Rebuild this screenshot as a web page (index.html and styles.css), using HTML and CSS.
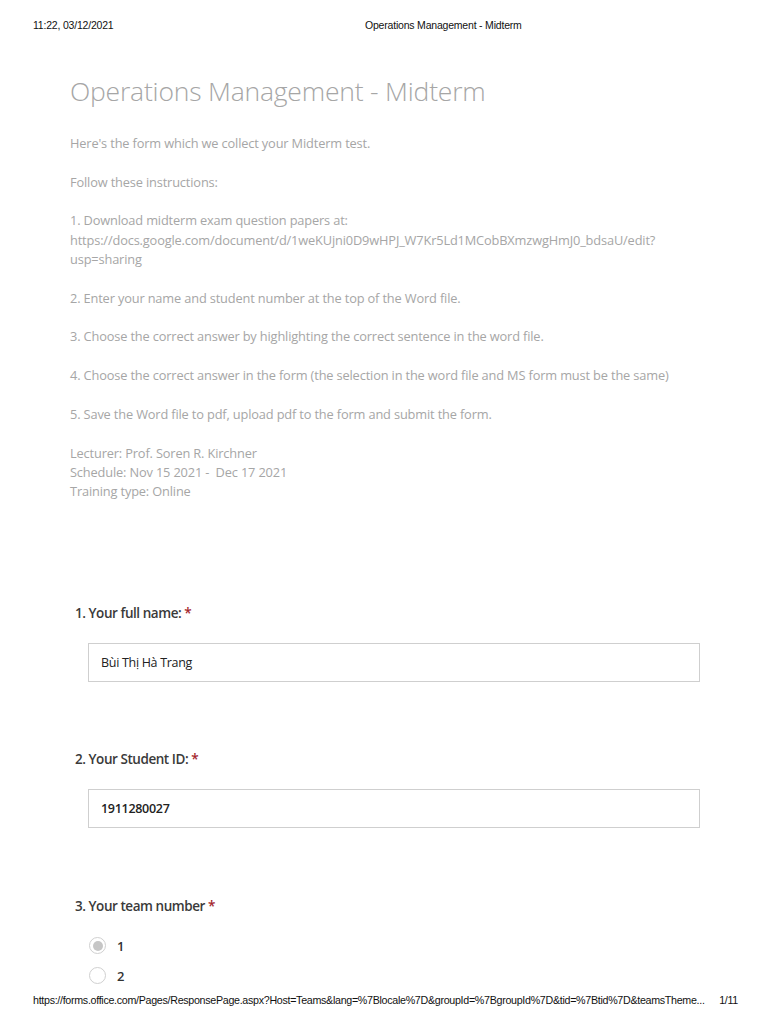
FILE: index.html
```
<!DOCTYPE html>
<html lang="en">
<head>
<meta charset="utf-8">
<title>Operations Management - Midterm</title>
<link rel="stylesheet" href="styles.css">
</head>
<body>
<div class="page">
  <header class="print-head">
    <span class="stamp">11:22, 03/12/2021</span>
    <span class="doc-title">Operations Management - Midterm</span>
    <span class="spacer"></span>
  </header>

  <main class="form">
    <h1 class="form-title">Operations Management - Midterm</h1>
    <div class="desc">
      <p>Here's the form which we collect your Midterm test.</p>
      <p>Follow these instructions:</p>
      <p>1. Download midterm exam question papers at:<br>https://docs.google.com/document/d/1weKUjni0D9wHPJ_W7Kr5Ld1MCobBXmzwgHmJ0_bdsaU/edit?<br>usp=sharing</p>
      <p>2. Enter your name and student number at the top of the Word file.</p>
      <p>3. Choose the correct answer by highlighting the correct sentence in the word file.</p>
      <p>4. Choose the correct answer in the form (the selection in the word file and MS form must be the same)</p>
      <p>5. Save the Word file to pdf, upload pdf to the form and submit the form.</p>
      <p>Lecturer: Prof. Soren R. Kirchner<br>Schedule: Nov 15 2021 -&nbsp; Dec 17 2021<br>Training type: Online</p>
    </div>

    <section class="question q-first">
      <div class="q-label">1. Your full name: <span class="req">*</span></div>
      <div class="answer-box">Bùi Thị Hà Trang</div>
    </section>

    <section class="question">
      <div class="q-label">2. Your Student ID: <span class="req">*</span></div>
      <div class="answer-box strong">1911280027</div>
    </section>

    <section class="question q-third">
      <div class="q-label">3. Your team number <span class="req">*</span></div>
      <div class="choices">
        <div class="choice"><span class="radio checked"></span><span class="choice-text">1</span></div>
        <div class="choice"><span class="radio"></span><span class="choice-text">2</span></div>
      </div>
    </section>
  </main>

  <footer class="print-foot">
    <span class="url">https://forms.office.com/Pages/ResponsePage.aspx?Host=Teams&amp;lang=%7Blocale%7D&amp;groupId=%7BgroupId%7D&amp;tid=%7Btid%7D&amp;teamsTheme...</span>
    <span class="pages">1/11</span>
  </footer>
</div>
</body>
</html>
```

FILE: styles.css
```
html, body {
  margin: 0;
  padding: 0;
  background: #ffffff;
}

.page {
  width: 768px;
  height: 1024px;
  position: relative;
  overflow: hidden;
  display: flex;
  flex-direction: column;
}

.print-head {
  display: flex;
  align-items: center;
  justify-content: space-between;
  padding: 18px 33px 0 33px;
  height: 13px;
  font-family: "Liberation Sans", Arial, sans-serif;
  font-size: 10.5px;
  color: #111;
  letter-spacing: -0.2px;
}

.print-head .stamp {
  width: 150px;
}

.print-head .doc-title {
  margin-left: 182px;
  flex: 0 0 auto;
}

.print-head .spacer {
  flex: 1;
}

.form {
  padding: 0 68px 0 70px;
  font-family: "Open Sans", "Noto Sans", sans-serif;
  flex: 1;
}

.form-title {
  margin: 43px 0 0 0;
  font-weight: 300;
  font-size: 26.5px;
  line-height: 34px;
  color: #a6a6a6;
  letter-spacing: -0.2px;
}

.desc {
  margin-top: 26px;
  font-size: 12.8px;
  line-height: 19.35px;
  color: #a6a6a6;
  letter-spacing: -0.15px;
}

.desc p {
  margin: 0 0 19.35px 0;
}

.q-first {
  margin-top: 101px;
}

.question + .question {
  margin-top: 67px;
}

.question.q-third {
  margin-top: 68px;
}

.q-label {
  font-size: 13.5px;
  line-height: 20px;
  color: #3a3a3a;
  font-weight: 560;
  letter-spacing: -0.45px;
  margin-left: 5px;
}

.req {
  color: #a4262c;
}

.answer-box {
  margin: 20px 0 0 18px;
  height: 37px;
  border: 1px solid #cfcfcf;
  padding: 0 12px;
  display: flex;
  align-items: center;
  font-size: 12.5px;
  color: #222;
  font-weight: 500;
  letter-spacing: -0.3px;
}

.answer-box.strong {
  font-weight: 600;
}

.choices {
  margin: 21px 0 0 19px;
  display: flex;
  flex-direction: column;
  gap: 12px;
}

.choice {
  display: flex;
  align-items: center;
  gap: 11px;
  height: 18px;
}

.radio {
  width: 15px;
  height: 15px;
  border: 1px solid #d0d0d0;
  border-radius: 50%;
  display: inline-flex;
  align-items: center;
  justify-content: center;
  box-sizing: content-box;
}

.radio.checked::after {
  content: "";
  width: 10px;
  height: 10px;
  border-radius: 50%;
  background: #c6c6c6;
}

.choice-text {
  font-size: 13px;
  color: #333;
  font-weight: 600;
}

.print-foot {
  position: absolute;
  left: 33px;
  right: 30px;
  top: 994px;
  display: flex;
  justify-content: space-between;
  font-family: "Liberation Sans", Arial, sans-serif;
  font-size: 10.7px;
  color: #111;
  letter-spacing: -0.3px;
}
```
